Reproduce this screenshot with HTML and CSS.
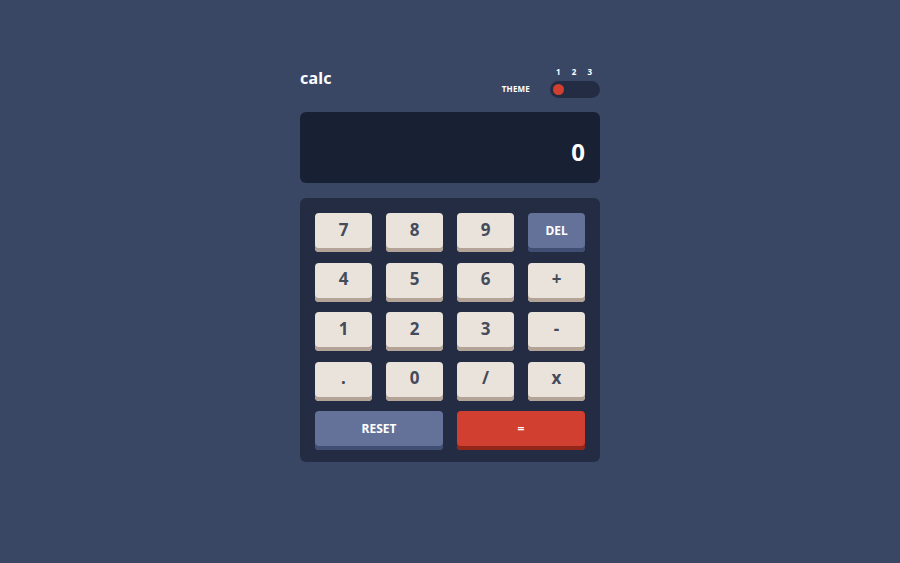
FILE: index.html
```html
<!DOCTYPE html>
<html lang="en">
<head>
<meta charset="utf-8">
<title>calc</title>
<link rel="stylesheet" href="styles.css">
</head>
<body>
<main class="calc">
  <header class="head">
    <h1 class="logo">calc</h1>
    <div class="theme">
      <span class="theme-label">THEME</span>
      <div class="theme-ctl">
        <div class="nums"><span>1</span><span>2</span><span>3</span></div>
        <div class="toggle"><span class="knob"></span></div>
      </div>
    </div>
  </header>
  <section class="screen">0</section>
  <section class="pad">
    <button class="key">7</button>
    <button class="key">8</button>
    <button class="key">9</button>
    <button class="key key-blue small">DEL</button>
    <button class="key">4</button>
    <button class="key">5</button>
    <button class="key">6</button>
    <button class="key">+</button>
    <button class="key">1</button>
    <button class="key">2</button>
    <button class="key">3</button>
    <button class="key">-</button>
    <button class="key">.</button>
    <button class="key">0</button>
    <button class="key">/</button>
    <button class="key">x</button>
    <button class="key key-blue small wide">RESET</button>
    <button class="key key-red small wide">=</button>
  </section>
</main>
</body>
</html>
```
FILE: styles.css
```css
* { box-sizing: border-box; }
html, body { margin: 0; height: 100%; }
body {
  background: #3a4764;
  font-family: "Noto Sans", "DejaVu Sans", sans-serif;
  font-weight: 700;
  color: #fff;
}
.calc {
  width: 300px;
  margin: 0 auto;
  padding-top: 64px;
}
.head {
  display: flex;
  justify-content: space-between;
  align-items: flex-end;
  height: 34px;
}
.logo {
  margin: 0 0 12px 0;
  font-size: 16px;
  line-height: 16px;
  letter-spacing: 0.2px;
  font-weight: 700;
}
.theme {
  display: flex;
  align-items: flex-end;
  gap: 20px;
}
.theme-label {
  font-size: 8px;
  letter-spacing: 0.2px;
  margin-bottom: 4px;
}
.theme-ctl {
  width: 50px;
  display: flex;
  flex-direction: column;
  gap: 5px;
}
.nums {
  display: flex;
  justify-content: space-between;
  padding: 0 8px 0 6px;
  font-size: 8px;
  line-height: 8px;
}
.toggle {
  height: 17px;
  border-radius: 9px;
  background: #232c43;
  padding: 3px 0 0 3px;
}
.knob {
  display: block;
  width: 11px;
  height: 11px;
  border-radius: 50%;
  background: #d03f2f;
}
.screen {
  margin-top: 14px;
  height: 71px;
  border-radius: 6px;
  background: #182034;
  text-align: right;
  padding: 25px 15px 0 0;
  font-size: 24px;
  line-height: 30px;
}
.pad {
  margin-top: 15px;
  background: #232c43;
  border-radius: 6px;
  padding: 15px 15px 12px;
  display: grid;
  grid-template-columns: repeat(4, 1fr);
  column-gap: 14px;
  row-gap: 10.5px;
}
.key {
  border: 0;
  height: 39px;
  border-radius: 4px;
  background: #eae3dc;
  box-shadow: inset 0 -4px 0 #b3a497;
  color: #444b5a;
  font-family: inherit;
  font-weight: 700;
  font-size: 17px;
  padding: 0 0 7px;
  cursor: pointer;
}
.key.small { font-size: 12px; color: #fff; padding-bottom: 5px; }
.key-blue { background: #647198; box-shadow: inset 0 -4px 0 #414e73; }
.key-red { background: #d03f2f; box-shadow: inset 0 -4px 0 #93261a; }
.wide { grid-column: span 2; }
```
